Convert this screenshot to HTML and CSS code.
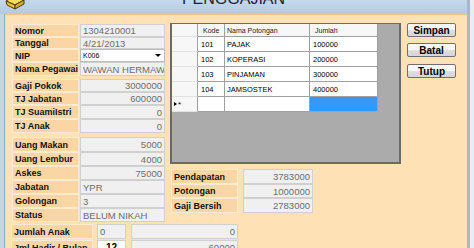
FILE: index.html
```html
<!DOCTYPE html>
<html lang="id">
<head>
    <meta charset="UTF-8">
    <title>Penggajian</title>
    <link rel="stylesheet" href="styles.css">
</head>
<body>

<div class="window">
    <div class="titlebar">
        <div class="app-icon">
            <svg width="22" height="16" viewBox="0 0 22 16">
                <polygon points="2,7 11,2 20,6 11,11" fill="#f7dc5a" stroke="#4a3c0c" stroke-width="1"/>
                <polygon points="2,7 11,11 11,15 3,11" fill="#e8c231" stroke="#4a3c0c" stroke-width="1"/>
                <polygon points="11,11 20,6 20,10 11,15" fill="#d4ac22" stroke="#4a3c0c" stroke-width="1"/>
            </svg>
        </div>
        <div class="title">PENGGAJIAN</div>
        <div></div>
    </div>

    <div class="frame">
        <div class="side"></div>
        <div class="form">
            <div class="top">
                <!-- data pegawai -->
                <div class="fields">
                    <div class="group">
                        <div class="row"><span class="label">Nomor</span><span class="box">1304210001</span></div>
                        <div class="row h12"><span class="label">Tanggal</span><span class="box">4/21/2013</span></div>
                        <div class="row"><span class="label">NIP</span><span class="box combo">K006<span class="arrow"></span></span></div>
                        <div class="row h14"><span class="label">Nama Pegawai</span><span class="box">WAWAN HERMAWAN</span></div>
                    </div>
                    <div class="group g2">
                        <div class="row"><span class="label">Gaji Pokok</span><span class="box num">3000000</span></div>
                        <div class="row"><span class="label">TJ Jabatan</span><span class="box num">600000</span></div>
                        <div class="row h14"><span class="label">TJ SuamiIstri</span><span class="box num">0</span></div>
                        <div class="row h14"><span class="label">TJ Anak</span><span class="box num">0</span></div>
                    </div>
                    <div class="group g3">
                        <div class="row h15"><span class="label">Uang Makan</span><span class="box num">5000</span></div>
                        <div class="row h14"><span class="label">Uang Lembur</span><span class="box num">4000</span></div>
                        <div class="row h14"><span class="label">Askes</span><span class="box num">75000</span></div>
                    </div>
                    <div class="group">
                        <div class="row h14"><span class="label">Jabatan</span><span class="box">YPR</span></div>
                        <div class="row h14"><span class="label">Golongan</span><span class="box">3</span></div>
                        <div class="row h14"><span class="label">Status</span><span class="box">BELUM NIKAH</span></div>
                    </div>
                </div>

                <!-- potongan + total -->
                <div class="middle">
                    <div class="grid">
                        <div class="grid-row grid-head">
                            <span class="c rh"></span>
                            <span class="c kode">Kode</span>
                            <span class="c nama">Nama Potongan</span>
                            <span class="c jml">Jumlah</span>
                        </div>
                        <div class="grid-row">
                            <span class="c rh"></span>
                            <span class="c kode">101</span>
                            <span class="c nama">PAJAK</span>
                            <span class="c jml">100000</span>
                        </div>
                        <div class="grid-row">
                            <span class="c rh"></span>
                            <span class="c kode">102</span>
                            <span class="c nama">KOPERASI</span>
                            <span class="c jml">200000</span>
                        </div>
                        <div class="grid-row">
                            <span class="c rh"></span>
                            <span class="c kode">103</span>
                            <span class="c nama">PINJAMAN</span>
                            <span class="c jml">300000</span>
                        </div>
                        <div class="grid-row">
                            <span class="c rh"></span>
                            <span class="c kode">104</span>
                            <span class="c nama">JAMSOSTEK</span>
                            <span class="c jml">400000</span>
                        </div>
                        <div class="grid-row">
                            <span class="c rh"><span class="pointer"></span>*</span>
                            <span class="c kode"></span>
                            <span class="c nama"></span>
                            <span class="c jml sel"></span>
                        </div>
                    </div>

                    <div class="totals">
                        <div class="row h15"><span class="label">Pendapatan</span><span class="box num">3783000</span></div>
                        <div class="row h14"><span class="label">Potongan</span><span class="box num">1000000</span></div>
                        <div class="row h15"><span class="label">Gaji Bersih</span><span class="box num">2783000</span></div>
                    </div>
                </div>

                <div class="buttons">
                    <button class="btn">Simpan</button>
                    <button class="btn">Batal</button>
                    <button class="btn">Tutup</button>
                </div>
            </div>

            <div class="bottom">
                <div class="row h15 wide"><span class="label">Jumlah Anak</span><span class="box short">0</span><span class="box long num">0</span></div>
                <div class="row h15 wide"><span class="label">Jml Hadir / Bulan</span><span class="box short edit">12</span><span class="box long num">60000</span></div>
            </div>
        </div>
    </div>
</div>

</body>
</html>
```

FILE: styles.css
```css
body {
    margin: 0;
    background-color: #e9edf1;
    font-family: "Liberation Sans", Arial, sans-serif;
    overflow: hidden;
    height: 248px;
}

.window {
    width: 467px;
    height: 248px;
    border-right: 3px solid #a8b8ca;
    display: flex;
    flex-direction: column;
}

/* title bar, only the bottom of it is visible */
.titlebar {
    height: 14px;
    flex-shrink: 0;
    background: linear-gradient(#c6d9ec, #b3cae3);
    display: grid;
    grid-template-columns: 1fr auto 1fr;
    overflow: hidden;
}

.app-icon svg {
    display: block;
    margin: -6px 0 0 4px;
}

.title {
    font-size: 16px;
    line-height: 18px;
    margin-top: -10px;
    color: #14223f;
}

.frame {
    flex: 1;
    display: flex;
    overflow: hidden;
}

.side {
    width: 4px;
    background-color: #c7d6e7;
    border-right: 1px solid #91a5bb;
}

.form {
    flex: 1;
    background-color: #fee1b5;
    border-top: 1px solid #f2c58b;
    padding: 8px 0 0 7px;
}

.top {
    display: flex;
    height: 199px;
}

/* label + textbox rows */
.fields {
    width: 153px;
    margin-top: 1px;
}

.g2 {
    margin-top: 3px;
}

.g3 {
    margin-top: 4px;
}

.row {
    display: flex;
    height: 13px;
}

.row.h12 { height: 12px; }
.row.h14 { height: 14px; }
.row.h15 { height: 15px; }

.label {
    box-sizing: border-box;
    width: 67px;
    height: 100%;
    flex-shrink: 0;
    background-color: #f9d6a3;
    border: 1px solid #fdebd1;
    padding-left: 2px;
    font-size: 9px;
    font-weight: bold;
    color: #111;
    display: flex;
    align-items: center;
    white-space: nowrap;
    overflow: hidden;
}

.box {
    box-sizing: border-box;
    width: 85px;
    height: 100%;
    flex-shrink: 0;
    margin-left: 1px;
    background-color: #f0f0f0;
    border: 1px solid #d0d0d0;
    padding: 0 2px;
    font-size: 9.5px;
    color: #6d6d6d;
    display: flex;
    align-items: center;
    white-space: nowrap;
    overflow: hidden;
}

.box.num {
    justify-content: flex-end;
}

.combo {
    background-color: #fff;
    color: #000;
    font-size: 7px;
    justify-content: space-between;
    border-color: #bcbcbc;
}

.arrow {
    width: 0;
    height: 0;
    border-left: 3px solid transparent;
    border-right: 3px solid transparent;
    border-top: 3px solid #000;
    margin-right: 1px;
}

/* data grid */
.middle {
    width: 231px;
    margin-left: 5px;
}

.grid {
    box-sizing: border-box;
    height: 141px;
    background-color: #ababab;
    border: 2px solid #6a6a6a;
    border-top-width: 1px;
}

.grid-row {
    display: flex;
    height: 15px;
}

.grid-row.grid-head {
    height: 13px;
}

.c {
    box-sizing: border-box;
    height: 100%;
    background-color: #fff;
    border-right: 1px solid #a0a0a0;
    border-bottom: 1px solid #a0a0a0;
    padding-left: 3px;
    font-size: 7.5px;
    color: #000;
    display: flex;
    align-items: center;
    white-space: nowrap;
    overflow: hidden;
}

.grid-head .c {
    background-color: #f7f7f7;
    font-size: 7px;
    padding-left: 5px;
    color: #222;
}

.c.rh {
    width: 26px;
    background-color: #f7f7f7;
    border-bottom-color: #e2e2e2;
    border-right-color: #a0a0a0;
    padding-left: 2px;
    font-size: 8px;
}

.c.kode { width: 27px; }
.c.nama { width: 85px; padding-left: 2px; }
.c.jml { width: 68px; }

.c.sel {
    background-color: #3399ff;
}

.pointer {
    width: 0;
    height: 0;
    border-top: 2px solid transparent;
    border-bottom: 2px solid transparent;
    border-left: 3px solid #000;
    margin-right: 1px;
}

.totals {
    margin: 5px 0 0 1px;
}

.totals .box {
    width: 70px;
    margin-left: 5px;
}

/* buttons */
.buttons {
    width: 49px;
    margin-left: 6px;
}

.btn {
    display: block;
    box-sizing: border-box;
    width: 49px;
    height: 14px;
    padding: 0;
    border: 1px solid #707070;
    border-radius: 2px;
    background: linear-gradient(#f7f7f7 45%, #dddddd 55%, #d6d6d6);
    font-family: "Liberation Sans", Arial, sans-serif;
    font-size: 10px;
    font-weight: bold;
    color: #000;
}

.btn + .btn {
    margin-top: 6px;
}

.btn:last-child {
    margin-top: 7px;
}

/* bottom rows */
.bottom {
    margin: 2px 0 0 -1px;
}

.bottom .row + .row {
    margin-top: 1px;
}

.wide .label {
    width: 82px;
}

.box.short {
    width: 29px;
    margin-left: 4px;
}

.box.long {
    width: 107px;
    margin-left: 5px;
}

.box.edit {
    background-color: #fff;
    color: #000;
    font-weight: bold;
    font-size: 10px;
    justify-content: center;
}
```
